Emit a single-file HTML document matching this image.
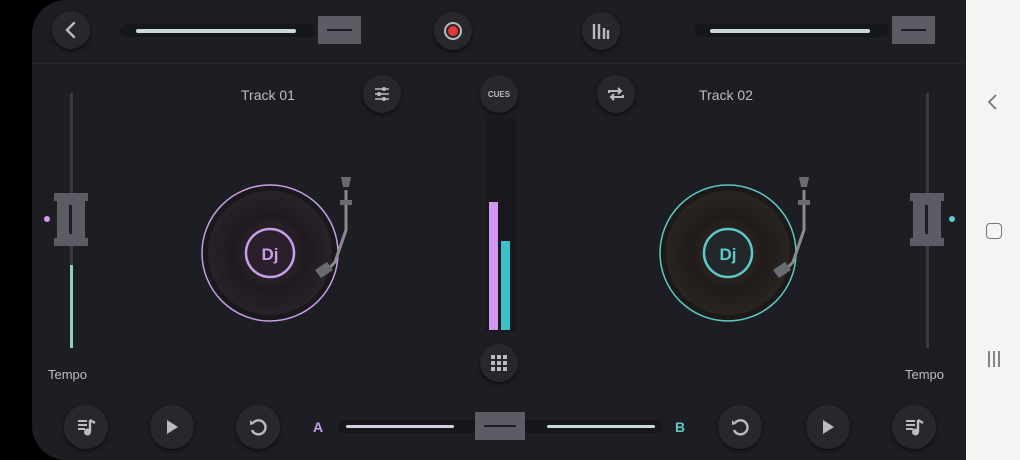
<!DOCTYPE html>
<html><head><meta charset="utf-8"><style>
*{margin:0;padding:0;box-sizing:border-box}
body{width:1020px;height:460px;background:#000;position:relative;overflow:hidden;font-family:"Liberation Sans",sans-serif}
.panel{position:absolute;left:32px;top:0;width:934px;height:460px;background:#1d1e23;border-radius:34px 0 0 34px}
.nav{position:absolute;left:966px;top:0;width:54px;height:460px;background:#f4f4f4}
.a{position:absolute}
.btn{position:absolute;width:38px;height:38px;border-radius:50%;background:#27282e;box-shadow:0 2px 4px rgba(0,0,0,.55);display:flex;align-items:center;justify-content:center}
.txt{position:absolute;color:#bdbdbd;font-size:14px}
.hs{position:absolute;height:4px;border-radius:2px;background:#c9d9d6}
.hh{position:absolute;background:#5b5c64;width:43px;height:28px}
.hh::after{content:"";position:absolute;left:9px;right:9px;top:13px;height:2px;background:#1d1e23}
.th{position:absolute;width:34px;height:53px}
.th .w{position:absolute;left:0;width:34px;height:8px;background:#5b5c64}
.th .m{position:absolute;left:3px;top:6px;width:28px;height:41px;background:#5b5c64}
.th .l{position:absolute;left:15px;top:12px;width:3px;height:29px;background:#1d1e23}
</style></head><body>
<div class="panel"></div>
<div class="nav">
<svg class="a" style="left:20px;top:92px" width="14" height="20"><path d="M10 3 L3 10 L10 17" stroke="#777" stroke-width="1.8" fill="none"/></svg>
<div class="a" style="left:20px;top:223px;width:16px;height:16px;border:1.8px solid #777;border-radius:4px"></div>
<svg class="a" style="left:20px;top:350px" width="16" height="18"><path d="M3 1v16M8 1v16M13 1v16" stroke="#777" stroke-width="1.8"/></svg>
</div>
<div class="a" style="left:32px;top:63px;width:934px;height:1px;background:#25262b"></div>

<div class="btn" style="left:52px;top:11px"><svg width="14" height="18"><path d="M10 2 L3 9 L10 16" stroke="#bbb" stroke-width="2.4" fill="none" stroke-linecap="round"/></svg></div>
<div class="a" style="left:120px;top:24px;width:195px;height:13px;background:#16171b;border-radius:6px"></div>
<div class="hs" style="left:136px;top:29px;width:160px"></div>
<div class="hh" style="left:318px;top:16px"></div>
<div class="btn" style="left:434px;top:12px"><div style="width:18px;height:18px;border-radius:50%;border:2px solid #bbb;display:flex;align-items:center;justify-content:center"><div style="width:10px;height:10px;border-radius:50%;background:#e83535"></div></div></div>
<div class="btn" style="left:582px;top:12px"><svg width="20" height="20"><path d="M3 3v15M8 3v15M13 7v11M17 9v9" stroke="#bbb" stroke-width="2.4"/></svg></div>
<div class="a" style="left:694px;top:24px;width:195px;height:13px;background:#16171b;border-radius:6px"></div>
<div class="hs" style="left:710px;top:29px;width:160px"></div>
<div class="hh" style="left:892px;top:16px"></div>

<div class="txt" style="left:241px;top:87px">Track 01</div>
<div class="txt" style="left:699px;top:87px">Track 02</div>
<div class="btn" style="left:363px;top:75px"><svg width="18" height="16"><path d="M2 3h14M2 8h14M2 13h14" stroke="#bbb" stroke-width="1.6"/><circle cx="11" cy="3" r="2" fill="#bbb"/><circle cx="6" cy="8" r="2" fill="#bbb"/><circle cx="11" cy="13" r="2" fill="#bbb"/></svg></div>
<div class="btn" style="left:480px;top:75px;color:#bbb;font-size:8px;font-weight:bold">CUES</div>
<div class="btn" style="left:597px;top:75px"><svg width="20" height="18"><path d="M3 8V6h12M12 3l3 3-3 3M17 10v2H5M8 15l-3-3 3-3" stroke="#bbb" stroke-width="2" fill="none"/></svg></div>

<div class="a" style="left:70px;top:93px;width:3px;height:100px;background:#3a3b42"></div>
<div class="a" style="left:70px;top:245px;width:3px;height:20px;background:#3a3b42"></div>
<div class="a" style="left:70px;top:265px;width:3px;height:83px;background:#8ecfc4"></div>
<div class="th" style="left:54px;top:193px"><div class="w" style="top:0"></div><div class="m"></div><div class="w" style="top:45px"></div><div class="l"></div></div>
<div class="a" style="left:44px;top:216px;width:6px;height:6px;border-radius:50%;background:#d29af0"></div>
<div class="txt" style="left:48px;top:367px;font-size:13px">Tempo</div>

<div class="a" style="left:926px;top:93px;width:3px;height:100px;background:#3a3b42"></div>
<div class="a" style="left:926px;top:245px;width:3px;height:103px;background:#3a3b42"></div>
<div class="th" style="left:910px;top:193px"><div class="w" style="top:0"></div><div class="m"></div><div class="w" style="top:45px"></div><div class="l"></div></div>
<div class="a" style="left:949px;top:216px;width:6px;height:6px;border-radius:50%;background:#5ec8d0"></div>
<div class="txt" style="left:905px;top:367px;font-size:13px">Tempo</div>

<svg class="a" style="left:195px;top:170px" width="170" height="160">
<defs><radialGradient id="g1"><stop offset="0" stop-color="#3a2d38"/><stop offset=".6" stop-color="#201a20"/><stop offset="1" stop-color="#2a2129"/></radialGradient></defs>
<circle cx="75" cy="83" r="68" fill="#1b181c" stroke="#c79ee8" stroke-width="1.5"/>
<circle cx="75" cy="83" r="62" fill="url(#g1)"/>
<circle cx="75" cy="83" r="24" fill="#2a1f2a" stroke="#c79ee8" stroke-width="2.5"/>
<text x="75" y="90" text-anchor="middle" font-family="Liberation Sans" font-weight="bold" font-size="17" fill="#c79ee8">Dj</text>
<path d="M151 20 V60 L140 92 L128 105" stroke="#8a8a8e" stroke-width="3" fill="none"/>
<path d="M146 7h10l-2 10h-6z" fill="#6a6b70"/>
<rect x="145" y="30" width="12" height="5" fill="#6a6b70"/>
<path d="M120 100 l12 -8 6 8 -12 8z" fill="#6a6b70"/>
</svg>
<svg class="a" style="left:653px;top:170px" width="170" height="160">
<defs><radialGradient id="g2"><stop offset="0" stop-color="#3a302a"/><stop offset=".6" stop-color="#201c1a"/><stop offset="1" stop-color="#2a2420"/></radialGradient></defs>
<circle cx="75" cy="83" r="68" fill="#1b1a19" stroke="#5ec8c8" stroke-width="1.5"/>
<circle cx="75" cy="83" r="62" fill="url(#g2)"/>
<circle cx="75" cy="83" r="24" fill="#22282a" stroke="#5ec8c8" stroke-width="2.5"/>
<text x="75" y="90" text-anchor="middle" font-family="Liberation Sans" font-weight="bold" font-size="17" fill="#5ec8c8">Dj</text>
<path d="M151 20 V60 L140 92 L128 105" stroke="#8a8a8e" stroke-width="3" fill="none"/>
<path d="M146 7h10l-2 10h-6z" fill="#6a6b70"/>
<rect x="145" y="30" width="12" height="5" fill="#6a6b70"/>
<path d="M120 100 l12 -8 6 8 -12 8z" fill="#6a6b70"/>
</svg>

<div class="a" style="left:485px;top:118px;width:31px;height:214px;background:#18191d"></div>
<div class="a" style="left:489px;top:202px;width:9px;height:128px;background:#d396f0"></div>
<div class="a" style="left:501px;top:241px;width:9px;height:89px;background:#3bbfc8"></div>
<div class="btn" style="left:480px;top:344px"><svg width="18" height="18"><g fill="#bbb"><rect x="1" y="1" width="4" height="4"/><rect x="7" y="1" width="4" height="4"/><rect x="13" y="1" width="4" height="4"/><rect x="1" y="7" width="4" height="4"/><rect x="7" y="7" width="4" height="4"/><rect x="13" y="7" width="4" height="4"/><rect x="1" y="13" width="4" height="4"/><rect x="7" y="13" width="4" height="4"/><rect x="13" y="13" width="4" height="4"/></g></svg></div>

<div class="btn" style="left:64px;top:405px;width:44px;height:44px"><svg width="20" height="20"><path d="M2 4h9M2 8h9M2 12h7" stroke="#bbb" stroke-width="2"/><path d="M14 3v12" stroke="#bbb" stroke-width="2.4"/><path d="M14 3l5 3" stroke="#bbb" stroke-width="2.4"/><circle cx="11.5" cy="15" r="3.5" fill="#bbb"/></svg></div>
<div class="btn" style="left:150px;top:405px;width:44px;height:44px"><svg width="16" height="18"><path d="M3 2L14 9L3 16z" fill="#bbb"/></svg></div>
<div class="btn" style="left:236px;top:405px;width:44px;height:44px"><svg width="20" height="20"><path d="M5 6A7 7 0 1 1 4 13" stroke="#bbb" stroke-width="2.4" fill="none"/><path d="M2 3l4 4-4 1z" fill="#bbb"/></svg></div>
<div class="btn" style="left:718px;top:405px;width:44px;height:44px"><svg width="20" height="20"><path d="M5 6A7 7 0 1 1 4 13" stroke="#bbb" stroke-width="2.4" fill="none"/><path d="M2 3l4 4-4 1z" fill="#bbb"/></svg></div>
<div class="btn" style="left:806px;top:405px;width:44px;height:44px"><svg width="16" height="18"><path d="M3 2L14 9L3 16z" fill="#bbb"/></svg></div>
<div class="btn" style="left:892px;top:405px;width:44px;height:44px"><svg width="20" height="20"><path d="M2 4h9M2 8h9M2 12h7" stroke="#bbb" stroke-width="2"/><path d="M14 3v12" stroke="#bbb" stroke-width="2.4"/><path d="M14 3l5 3" stroke="#bbb" stroke-width="2.4"/><circle cx="11.5" cy="15" r="3.5" fill="#bbb"/></svg></div>

<div class="a" style="left:313px;top:419px;color:#c79ee8;font-weight:bold;font-size:14px">A</div>
<div class="a" style="left:675px;top:419px;color:#5ec8c8;font-weight:bold;font-size:14px">B</div>
<div class="a" style="left:338px;top:420px;width:325px;height:13px;background:#16171b;border-radius:6px"></div>
<div class="hs" style="left:346px;top:425px;width:108px;height:3px;background:#d9cde4"></div>
<div class="hs" style="left:547px;top:425px;width:108px;height:3px;background:#c9d9d6"></div>
<div class="hh" style="left:475px;top:412px;width:50px"></div>
</body></html>
